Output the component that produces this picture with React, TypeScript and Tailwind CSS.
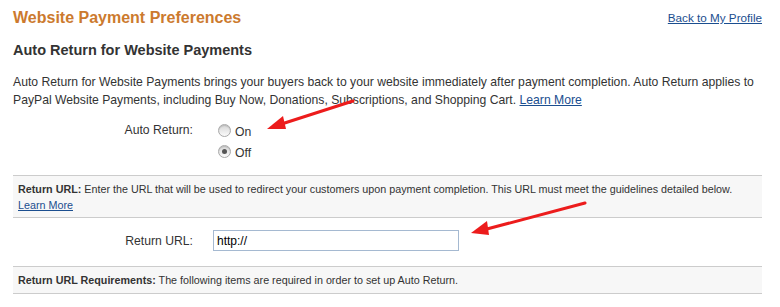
import React from "react";

function Radio({ checked }: { checked?: boolean }) {
  return (
    <span className="relative inline-flex h-[13px] w-[13px] items-center justify-center rounded-full border border-[#a9a9a9] bg-gradient-to-b from-[#d6d6d6] to-[#fbfbfb] shadow-[inset_0_1px_1px_rgba(0,0,0,0.15)]">
      {checked && <span className="h-[5px] w-[5px] rounded-full bg-[#555]" />}
    </span>
  );
}

export default function App() {
  return (
    <div className="relative h-[307px] w-[780px] overflow-hidden bg-white font-['Liberation_Sans',Arial,sans-serif] text-[#333]">
      <div className="pl-[13px] pr-[18px]">
        <div className="flex items-start justify-between pt-[8px]">
          <h1 className="text-[16px] font-bold leading-[20px] text-[#cc7a2e]">Website Payment Preferences</h1>
          <a className="mt-[3px] text-[11.7px] leading-[14px] text-[#1b4e8f] underline">Back to My Profile</a>
        </div>
        <h2 className="mt-[13px] text-[14.5px] font-bold leading-[18px] text-[#333]">Auto Return for Website Payments</h2>
        <p className="mt-[14px] text-[12.2px] leading-[18px]">
          Auto Return for Website Payments brings your buyers back to your website immediately after payment completion. Auto Return applies to PayPal Website Payments, including Buy Now, Donations, Subscriptions, and Shopping Cart.{" "}
          <a className="text-[#1b4e8f] underline">Learn More</a>
        </p>
        <div className="mt-[12px] flex text-[12.2px]">
          <div className="w-[180px] text-right leading-[18px]">Auto Return:</div>
          <div className="ml-[25px] flex flex-col gap-[3px]">
            <label className="flex h-[18px] items-center gap-[4px] leading-[18px]">
              <Radio />
              <span className="mt-[3px]">On</span>
            </label>
            <label className="flex h-[18px] items-center gap-[4px] leading-[18px]">
              <Radio checked />
              <span className="mt-[3px]">Off</span>
            </label>
          </div>
        </div>
        <div className="mt-[15px] border-y border-[#cccccc] bg-[#f7f7f7] px-[5px] pb-[4px] pt-[5px] text-[10.75px] leading-[16px]">
          <b>Return URL:</b> Enter the URL that will be used to redirect your customers upon payment completion. This URL must meet the guidelines detailed below.
          <br />
          <a className="text-[#1b4e8f] underline">Learn More</a>
        </div>
        <div className="flex items-center pt-[12px] text-[12.2px]">
          <div className="w-[180px] text-right leading-[18px]">Return URL:</div>
          <input
            defaultValue="http://"
            className="ml-[20px] h-[21px] w-[246px] border border-[#a5b9d1] bg-white px-[3px] text-[12px] text-black outline-none"
          />
        </div>
        <div className="mt-[15px] border-y border-[#cccccc] bg-[#f7f7f7] px-[5px] pb-[5px] pt-[6px] text-[10.75px] leading-[15px]">
          <b>Return URL Requirements:</b> The following items are required in order to set up Auto Return.
        </div>
      </div>
      <svg className="pointer-events-none absolute left-0 top-0" width="780" height="307" viewBox="0 0 780 307">
        <line x1="353" y1="101" x2="280" y2="124.5" stroke="#ec1c1c" strokeWidth="3" strokeLinecap="round" />
        <polygon points="267,129 283,116 286,129" fill="#ec1c1c" />
        <line x1="585" y1="203" x2="484" y2="229.8" stroke="#ec1c1c" strokeWidth="3" strokeLinecap="round" />
        <polygon points="471,233 487,221 489,235" fill="#ec1c1c" />
      </svg>
    </div>
  );
}
